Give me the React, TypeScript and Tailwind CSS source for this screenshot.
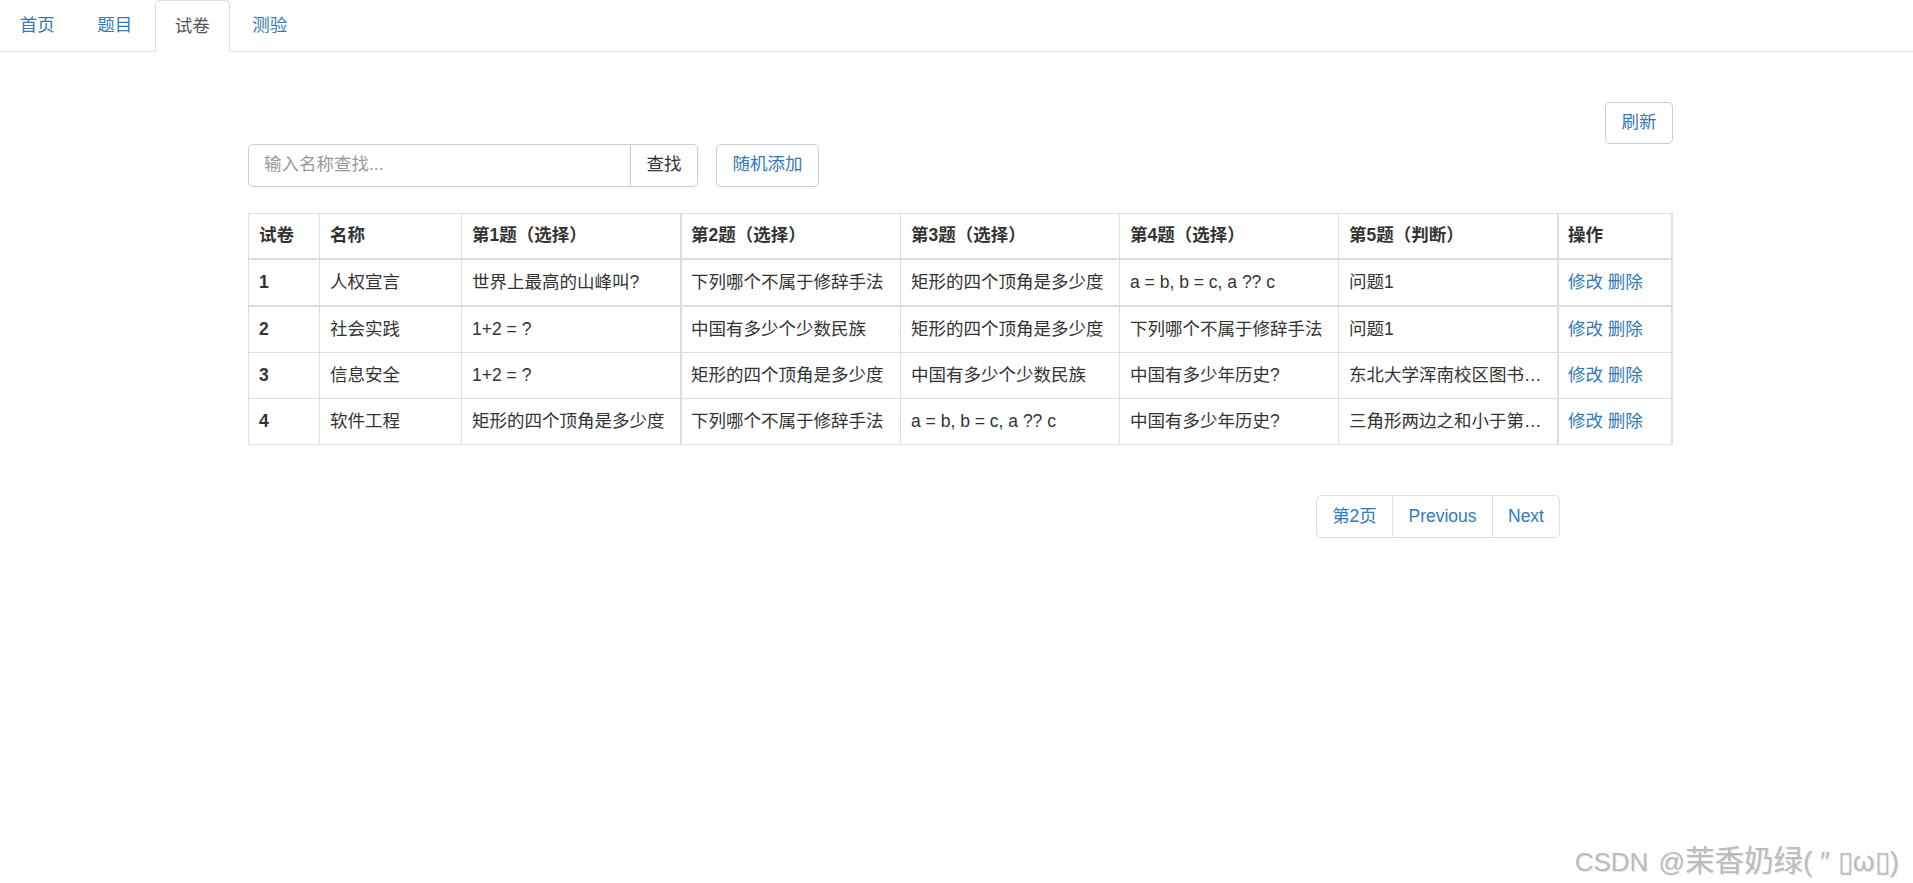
import React from 'react';

const tabs = ['首页', '题目', '试卷', '测验'];

const rows = [
  ['1', '人权宣言', '世界上最高的山峰叫?', '下列哪个不属于修辞手法', '矩形的四个顶角是多少度', 'a = b, b = c, a ?? c', '问题1'],
  ['2', '社会实践', '1+2 = ?', '中国有多少个少数民族', '矩形的四个顶角是多少度', '下列哪个不属于修辞手法', '问题1'],
  ['3', '信息安全', '1+2 = ?', '矩形的四个顶角是多少度', '中国有多少个少数民族', '中国有多少年历史?', '东北大学浑南校区图书馆在哪里'],
  ['4', '软件工程', '矩形的四个顶角是多少度', '下列哪个不属于修辞手法', 'a = b, b = c, a ?? c', '中国有多少年历史?', '三角形两边之和小于第三边吗'],
];

const headers = ['试卷', '名称', '第1题（选择）', '第2题（选择）', '第3题（选择）', '第4题（选择）', '第5题（判断）', '操作'];

// columns that came out with a double line in the original
const cellRight = [
  'border-r',
  'border-r',
  'border-r-2',
  'border-r',
  'border-r',
  'border-r',
  'border-r-2',
  'border-r-2',
];

// text after a double line sits one pixel further left
const cellPad = [
  'px-[10px]',
  'px-[10px]',
  'px-[10px]',
  'pl-[9px] pr-[10px]',
  'px-[10px]',
  'px-[10px]',
  'px-[10px]',
  'pl-[9px] pr-[10px]',
];

const App: React.FC = () => {
  return (
    <div className="relative h-[883px] w-full overflow-hidden bg-white font-['Liberation_Sans','Noto_Sans_CJK_SC',sans-serif] text-[17.5px] leading-[25px] text-[#333]">
      <ul className="flex h-[52px] border-b border-[#ddd]">
        {tabs.map((tab, i) =>
          i === 2 ? (
            <li
              key={tab}
              className="mr-[2.5px] h-[52px] w-[75px] rounded-t-[5px] border border-[#ddd] border-b-white bg-white px-[18.75px] py-[12.5px] text-[#555]"
            >
              {tab}
            </li>
          ) : (
            <li key={tab} className="mr-[2.5px] h-[51px] w-[75px] px-[19.75px] py-[13px] text-[#337ab7]">
              {tab}
            </li>
          ),
        )}
      </ul>

      <div className="ml-[248px] w-[1425px]">
        <div className="mt-[50px] flex justify-end">
          <button className="h-[42px] w-[68px] rounded-[5px] border border-[#ccc] bg-white pb-[2px] text-[#337ab7]">刷新</button>
        </div>

        <div className="flex h-[43px]">
          <input
            placeholder="输入名称查找..."
            className="w-[383px] rounded-l-[5px] border border-[#ccc] px-[15px] pb-[2px] placeholder:text-[#999]"
          />
          <button className="-ml-px w-[68px] rounded-r-[5px] border border-[#ccc] bg-white pb-[2px]">查找</button>
          <button className="ml-[18px] w-[103px] rounded-[5px] border border-[#ccc] bg-white pb-[2px] text-[#337ab7]">随机添加</button>
        </div>

        <table className="mt-[26px] w-[1425px] table-fixed border-separate border-spacing-0 border-l border-t border-[#ddd]">
          <colgroup>
            <col className="w-[71px]" />
            <col className="w-[142px]" />
            <col className="w-[220px]" />
            <col className="w-[219px]" />
            <col className="w-[219px]" />
            <col className="w-[219px]" />
            <col className="w-[220px]" />
            <col className="w-[114px]" />
          </colgroup>
          <thead>
            <tr>
              {headers.map((h, i) => (
                <th key={h} className={`h-[46px] border-b-2 border-[#ddd] pb-[2px] text-left font-bold ${cellPad[i]} ${cellRight[i]}`}>
                  {h}
                </th>
              ))}
            </tr>
          </thead>
          <tbody>
            {rows.map((row, r) => (
              <tr key={row[0]}>
                {row.map((cell, i) => (
                  <td
                    key={i}
                    className={`truncate border-[#ddd] ${cellPad[i]} ${r === 0 ? 'h-[47px] border-b-2' : 'h-[46px] border-b'} ${cellRight[i]} ${i === 0 ? 'font-bold' : ''}`}
                  >
                    {cell}
                  </td>
                ))}
                <td className={`border-[#ddd] text-[#337ab7] ${cellPad[7]} ${r === 0 ? 'h-[47px] border-b-2' : 'h-[46px] border-b'} ${cellRight[7]}`}>
                  修改 删除
                </td>
              </tr>
            ))}
          </tbody>
        </table>

        <div className="mt-[50px] ml-[1068px] flex h-[43px] w-[244px] text-[#337ab7]">
          <span className="flex w-[77px] items-center justify-center rounded-l-[5px] border border-[#ddd] pb-[1px]">第2页</span>
          <span className="-ml-px flex w-[101px] items-center justify-center border border-[#ddd] pb-[1px]">Previous</span>
          <span className="-ml-px flex flex-1 items-center justify-center rounded-r-[5px] border border-[#ddd] pb-[1px]">Next</span>
        </div>
      </div>

      <div className="absolute bottom-[1px] right-[14px] text-[28px] leading-[40px] whitespace-nowrap text-[#bbb] [text-shadow:1px_1px_1px_#e4e4e4]">
        <span className="text-[26px] [word-spacing:3px]">CSDN @</span>
        <span className="text-[29.5px]">茉香奶绿</span>( ″ ▯ω▯)
      </div>
    </div>
  );
};

export default App;
